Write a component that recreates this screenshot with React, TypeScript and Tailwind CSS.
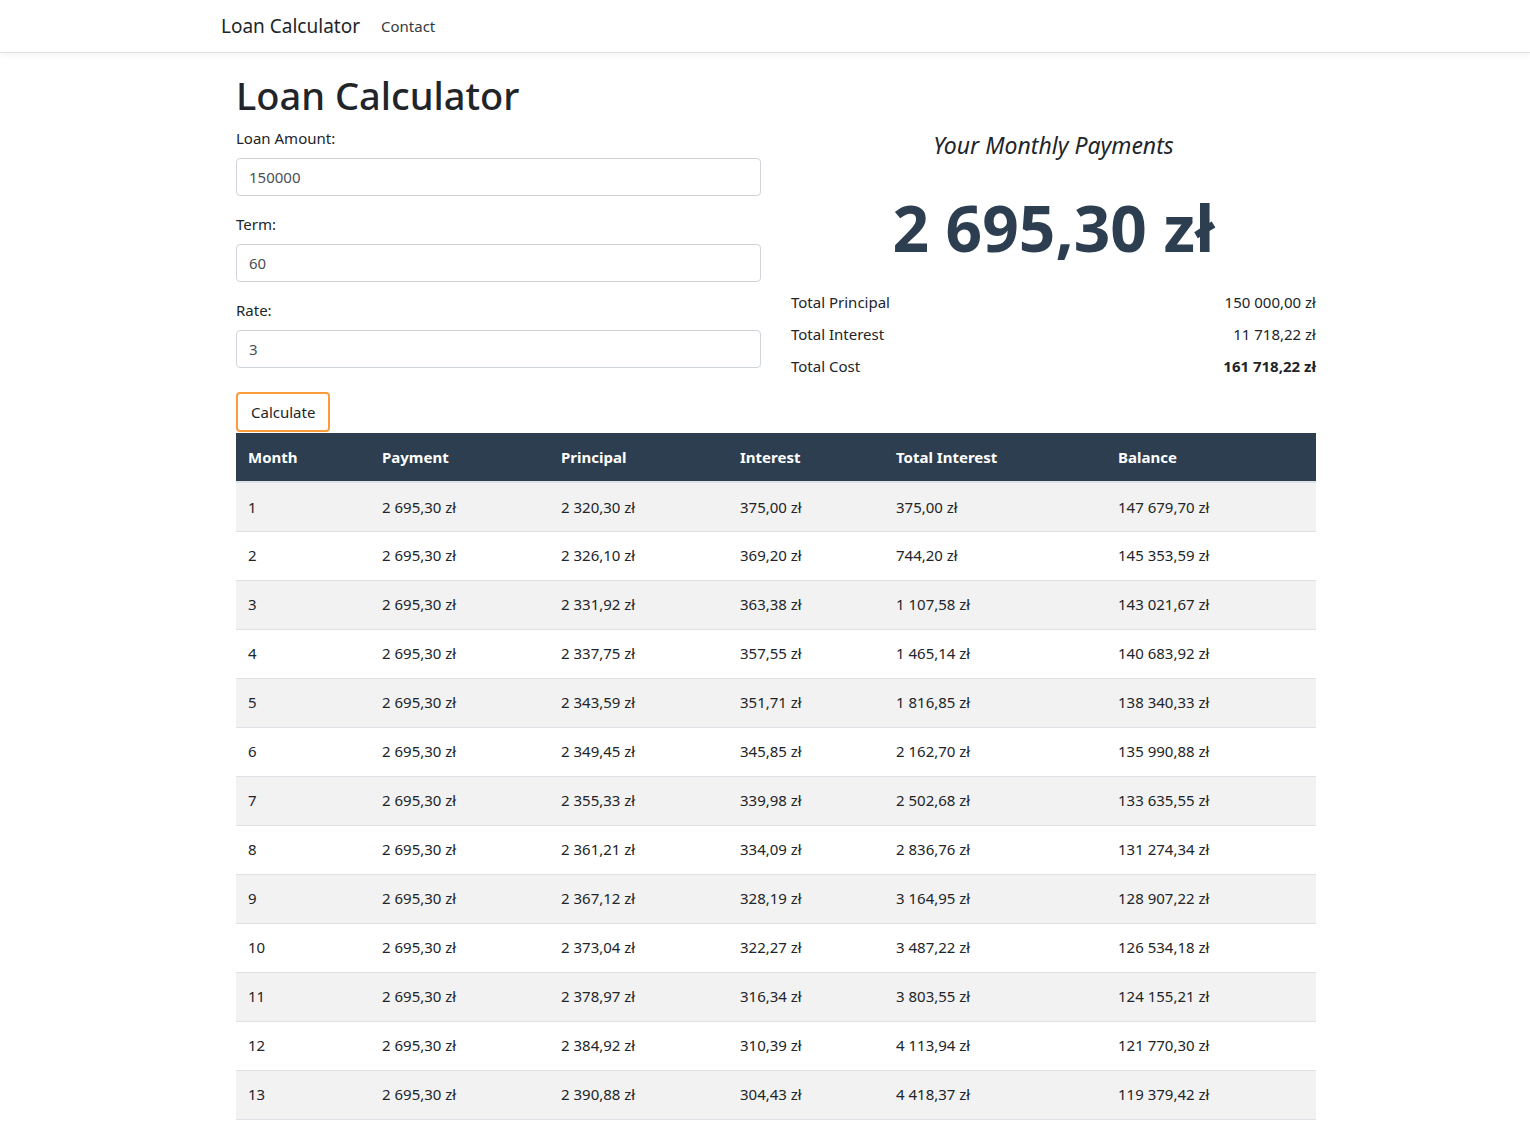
import React from 'react';

const ROWS = [
  ['1', '2 695,30 zł', '2 320,30 zł', '375,00 zł', '375,00 zł', '147 679,70 zł'],
  ['2', '2 695,30 zł', '2 326,10 zł', '369,20 zł', '744,20 zł', '145 353,59 zł'],
  ['3', '2 695,30 zł', '2 331,92 zł', '363,38 zł', '1 107,58 zł', '143 021,67 zł'],
  ['4', '2 695,30 zł', '2 337,75 zł', '357,55 zł', '1 465,14 zł', '140 683,92 zł'],
  ['5', '2 695,30 zł', '2 343,59 zł', '351,71 zł', '1 816,85 zł', '138 340,33 zł'],
  ['6', '2 695,30 zł', '2 349,45 zł', '345,85 zł', '2 162,70 zł', '135 990,88 zł'],
  ['7', '2 695,30 zł', '2 355,33 zł', '339,98 zł', '2 502,68 zł', '133 635,55 zł'],
  ['8', '2 695,30 zł', '2 361,21 zł', '334,09 zł', '2 836,76 zł', '131 274,34 zł'],
  ['9', '2 695,30 zł', '2 367,12 zł', '328,19 zł', '3 164,95 zł', '128 907,22 zł'],
  ['10', '2 695,30 zł', '2 373,04 zł', '322,27 zł', '3 487,22 zł', '126 534,18 zł'],
  ['11', '2 695,30 zł', '2 378,97 zł', '316,34 zł', '3 803,55 zł', '124 155,21 zł'],
  ['12', '2 695,30 zł', '2 384,92 zł', '310,39 zł', '4 113,94 zł', '121 770,30 zł'],
  ['13', '2 695,30 zł', '2 390,88 zł', '304,43 zł', '4 418,37 zł', '119 379,42 zł'],
];

const HEADERS = ['Month', 'Payment', 'Principal', 'Interest', 'Total Interest', 'Balance'];
const COL_WIDTHS = ['w-[134px]', 'w-[179px]', 'w-[179px]', 'w-[156px]', 'w-[222px]', 'w-[210px]'];

const Field = ({ label, value }: { label: string; value: string }) => (
  <div className="flex flex-col">
    <label className="text-[15px] leading-6 mb-2">{label}</label>
    <input
      readOnly
      value={value}
      className="h-[38px] w-full rounded border border-[#ced4da] px-3 text-[15px] text-[#495057] outline-none"
    />
  </div>
);

export default function App() {
  return (
    <div className="min-h-screen bg-white text-[#212529] font-['Noto_Sans',sans-serif]">
      {/* Navbar */}
      <nav className="h-[53px] border-b border-[#dee2e6] shadow-[0_2px_6px_rgba(0,0,0,0.05)] flex items-center pl-[221px]">
        <span className="text-[19px] text-[#212529]">Loan Calculator</span>
        <span className="ml-[21px] text-[15px] text-[#343a40]">Contact</span>
      </nav>

      <main className="pl-[236px] w-[1316px] pb-10">
        <h1 className="mt-[18px] text-[38px] leading-[48px] font-medium">Loan Calculator</h1>

        <div className="flex gap-[30px] mt-[7px]">
          <div className="w-[525px] flex flex-col gap-[16px]">
            <Field label="Loan Amount:" value="150000" />
            <Field label="Term:" value="60" />
            <Field label="Rate:" value="3" />
            <div className="mt-2">
              <button className="h-10 px-[13px] rounded border-2 border-[#fd9a3c] text-[15px] text-[#212529] bg-white">
                Calculate
              </button>
            </div>
          </div>
          <div className="w-[525px] flex flex-col">
            <h2 className="text-center italic text-[23px] leading-8 mt-[3px]">Your Monthly Payments</h2>
            <div className="text-center font-bold text-[64px] leading-[80px] text-[#2c3e50] mt-[27px]">2 695,30 zł</div>
            <div className="mt-[18px] flex flex-col text-[15px]">
              <div className="flex justify-between h-8 items-center">
                <span>Total Principal</span>
                <span>150 000,00 zł</span>
              </div>
              <div className="flex justify-between h-8 items-center">
                <span>Total Interest</span>
                <span>11 718,22 zł</span>
              </div>
              <div className="flex justify-between h-8 items-center">
                <span>Total Cost</span>
                <span className="font-bold">161 718,22 zł</span>
              </div>
            </div>
          </div>
        </div>

        <table className="w-[1080px] border-collapse text-[15px] mt-[1px]">
          <thead>
            <tr className="bg-[#2c3e50] text-white h-[49px] border-b-2 border-[#dee2e6]">
              {HEADERS.map((h, i) => (
                <th key={h} className={`${COL_WIDTHS[i]} text-left px-3 font-bold`}>{h}</th>
              ))}
            </tr>
          </thead>
          <tbody>
            {ROWS.map((r, idx) => (
              <tr key={r[0]} className={`h-[49px] border-b border-[#dee2e6] ${idx % 2 === 0 ? 'bg-[#f2f2f2]' : 'bg-white'}`}>
                {r.map((c, i) => (
                  <td key={i} className="px-3">{c}</td>
                ))}
              </tr>
            ))}
          </tbody>
        </table>
      </main>
    </div>
  );
}
